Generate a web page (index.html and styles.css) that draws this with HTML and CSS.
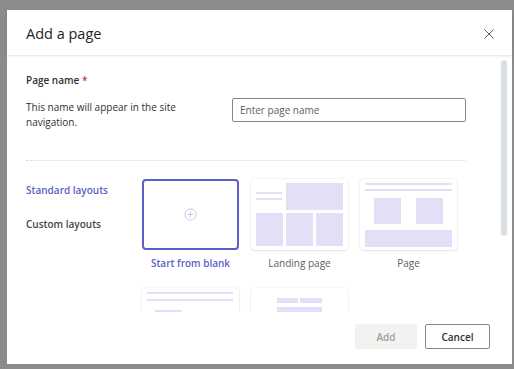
FILE: index.html
```html
<!DOCTYPE html>
<html lang="en">
<head>
<meta charset="utf-8">
<title>Add a page</title>
<link rel="stylesheet" href="styles.css">
</head>
<body>
<div class="overlay">
  <div class="dialog">
    <header class="dlg-head">
      <h1 class="dlg-title">Add a page</h1>
      <button class="close-btn" aria-label="Close">
        <svg width="10" height="10" viewBox="0 0 10 10"><path d="M0.5 0.5L9.5 9.5M9.5 0.5L0.5 9.5" stroke="#605e5c" stroke-width="1" fill="none"/></svg>
      </button>
    </header>
    <div class="dlg-body">
      <div class="scroll-content">
        <div class="field-label">Page name <span class="req">*</span></div>
        <div class="field-row">
          <p class="hint">This name will appear in the site<br>navigation.</p>
          <input class="text-input" type="text" placeholder="Enter page name">
        </div>
        <div class="sep"></div>
        <div class="layouts">
          <nav class="layout-nav">
            <a class="nav-item active">Standard layouts</a>
            <a class="nav-item">Custom layouts</a>
          </nav>
          <div class="template-grid">
            <figure class="tpl">
              <div class="card card-selected">
                <svg width="13" height="13" viewBox="0 0 13 13"><circle cx="6.5" cy="6.5" r="5.6" stroke="#c9c7e3" stroke-width="1" fill="none"/><path d="M6.5 3.6V9.4M3.6 6.5H9.4" stroke="#c9c7e3" stroke-width="1"/></svg>
              </div>
              <figcaption class="tpl-name selected">Start from blank</figcaption>
            </figure>
            <figure class="tpl">
              <div class="card">
                <svg width="97" height="71" viewBox="0 0 97 71">
                  <g fill="#e2e0f6">
                    <rect x="5" y="13" width="26" height="2"/>
                    <rect x="5" y="19" width="26" height="2"/>
                    <rect x="35" y="4" width="57" height="27"/>
                    <rect x="5" y="34" width="27" height="33"/>
                    <rect x="35" y="34" width="27" height="33"/>
                    <rect x="65" y="34" width="27" height="33"/>
                  </g>
                </svg>
              </div>
              <figcaption class="tpl-name">Landing page</figcaption>
            </figure>
            <figure class="tpl">
              <div class="card">
                <svg width="97" height="71" viewBox="0 0 97 71">
                  <g fill="#e2e0f6">
                    <rect x="5" y="4" width="87" height="2"/>
                    <rect x="5" y="10" width="87" height="2"/>
                    <rect x="14" y="19" width="27" height="26"/>
                    <rect x="56" y="19" width="27" height="26"/>
                    <rect x="5" y="51" width="87" height="17"/>
                  </g>
                </svg>
              </div>
              <figcaption class="tpl-name">Page</figcaption>
            </figure>
            <figure class="tpl">
              <div class="card">
                <svg width="97" height="71" viewBox="0 0 97 71">
                  <g fill="#e2e0f6">
                    <rect x="5" y="4" width="86" height="2"/>
                    <rect x="5" y="11" width="86" height="2"/>
                    <rect x="13" y="22" width="27" height="2"/>
                  </g>
                </svg>
              </div>
            </figure>
            <figure class="tpl">
              <div class="card">
                <svg width="97" height="71" viewBox="0 0 97 71">
                  <g fill="#e2e0f6">
                    <rect x="26" y="10" width="21" height="5"/>
                    <rect x="49" y="10" width="22" height="5"/>
                    <rect x="26" y="19" width="45" height="5"/>
                  </g>
                </svg>
              </div>
            </figure>
          </div>
        </div>
      </div>
      <div class="scroll-track"><div class="scroll-thumb"></div></div>
    </div>
    <footer class="dlg-foot">
      <button class="btn btn-disabled" disabled>Add</button>
      <button class="btn btn-default">Cancel</button>
    </footer>
  </div>
</div>
</body>
</html>
```
FILE: styles.css
```css
* { box-sizing: border-box; }
html, body {
  margin: 0;
  padding: 0;
  width: 514px;
  height: 369px;
  overflow: hidden;
  background: #8b8b8b;
  font-family: "Open Sans", "Noto Sans", sans-serif;
  color: #323130;
}
.overlay {
  padding: 10px 2px 0 7px;
}
.dialog {
  width: 505px;
  height: 354px;
  background: #ffffff;
  display: flex;
  flex-direction: column;
}
.dlg-head {
  height: 45px;
  flex: none;
  display: flex;
  align-items: center;
  justify-content: space-between;
  padding: 2px 18px 0 19px;
  box-shadow: 0 1px 2px rgba(0,0,0,0.12);
  position: relative;
  z-index: 1;
}
.dlg-title {
  margin: 0;
  font-size: 14.5px;
  font-weight: 400;
  color: #242424;
  letter-spacing: 0;
}
.close-btn {
  border: 0;
  background: none;
  padding: 0;
  width: 10px;
  height: 10px;
  display: flex;
}
.dlg-body {
  height: 257px;
  flex: none;
  display: flex;
  overflow: hidden;
}
.scroll-content {
  width: 459px;
  flex: none;
  padding: 18px 0 0 19px;
}
.field-label {
  font-size: 10px;
  line-height: 14px;
  font-weight: 600;
  color: #323130;
}
.req { color: #c4314b; }
.field-row {
  margin-top: 11px;
  display: flex;
  align-items: flex-start;
  justify-content: space-between;
}
.hint {
  margin: 2px 0 0;
  font-size: 10px;
  line-height: 15px;
  color: #323130;
}
.text-input {
  width: 234px;
  height: 24px;
  border: 1px solid #8a8886;
  border-radius: 2px;
  padding: 0 7px;
  font-family: inherit;
  font-size: 10px;
  color: #323130;
  outline: none;
}
.text-input::placeholder { color: #605e5c; }
.sep {
  margin-top: 30px;
  height: 1px;
  border-top: 1px dotted #d6d6d6;
}
.layouts {
  margin-top: 18px;
  display: flex;
}
.layout-nav {
  width: 116px;
  flex: none;
  display: flex;
  flex-direction: column;
  gap: 20px;
  padding-top: 4px;
}
.nav-item {
  font-size: 10px;
  line-height: 14px;
  font-weight: 600;
  color: #484644;
}
.nav-item.active { color: #5b5fc7; }
.template-grid {
  display: grid;
  grid-template-columns: repeat(3, 97px);
  column-gap: 12px;
  row-gap: 18px;
}
.tpl {
  margin: 0;
  display: flex;
  flex-direction: column;
  align-items: center;
}
.card {
  width: 97px;
  height: 71px;
  background: #fff;
  border-radius: 4px;
  box-shadow: 0 0 2px rgba(0,0,0,0.12), 0 1px 2px rgba(0,0,0,0.08);
  display: flex;
  align-items: center;
  justify-content: center;
  overflow: hidden;
}
.card svg { display: block; }
.card-selected {
  border: 2px solid #5b5fc7;
  box-shadow: none;
}
.tpl-name {
  margin-top: 6px;
  font-size: 10px;
  line-height: 14px;
  color: #605e5c;
}
.tpl-name.selected {
  color: #5b5fc7;
  font-weight: 600;
}
.scroll-track {
  margin: 5px 0 0 35px;
  width: 6px;
}
.scroll-thumb {
  height: 176px;
  border-radius: 3px;
  background: #dadfe3;
}
.dlg-foot {
  flex: 1;
  display: flex;
  justify-content: flex-end;
  gap: 8px;
  padding: 12px 22px 0 0;
}
.btn {
  height: 25px;
  border-radius: 2px;
  font-family: inherit;
  font-size: 10px;
  font-weight: 600;
  padding: 0;
}
.btn-disabled {
  width: 62px;
  background: #f3f2f1;
  border: 0;
  color: #a19f9d;
}
.btn-default {
  width: 65px;
  background: #fff;
  border: 1px solid #8a8886;
  color: #323130;
}
```
